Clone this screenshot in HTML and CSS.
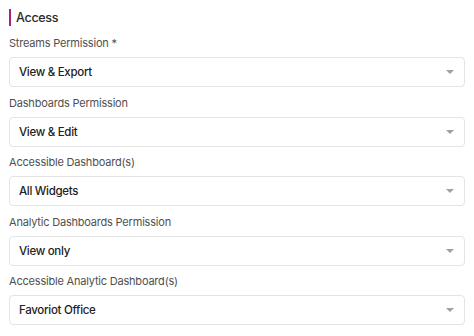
FILE: index.html
```html
<!DOCTYPE html>
<html>
<head>
<meta charset="utf-8">
<link rel="stylesheet" href="styles.css">
</head>
<body>
<div class="panel">
  <h2 class="section-title">Access</h2>

  <div class="field">
    <label class="field-label">Streams Permission *</label>
    <div class="select"><span class="select-value">View &amp; Export</span><span class="caret"></span></div>
  </div>

  <div class="field">
    <label class="field-label">Dashboards Permission</label>
    <div class="select"><span class="select-value">View &amp; Edit</span><span class="caret"></span></div>
  </div>

  <div class="field">
    <label class="field-label">Accessible Dashboard(s)</label>
    <div class="select"><span class="select-value">All Widgets</span><span class="caret"></span></div>
  </div>

  <div class="field">
    <label class="field-label">Analytic Dashboards Permission</label>
    <div class="select"><span class="select-value">View only</span><span class="caret"></span></div>
  </div>

  <div class="field">
    <label class="field-label">Accessible Analytic Dashboard(s)</label>
    <div class="select"><span class="select-value">Favoriot Office</span><span class="caret"></span></div>
  </div>
</div>
</body>
</html>
```

FILE: styles.css
```css
html, body {
  margin: 0;
  padding: 0;
  background: #ffffff;
}

body {
  font-family: Inter, "Noto Sans", "Liberation Sans", sans-serif;
  color: #333333;
}

.panel {
  padding: 9px 9px 0 9px;
  display: flex;
  flex-direction: column;
}

.section-title {
  margin: 0 0 9px 0;
  height: 17px;
  line-height: 17px;
  font-size: 12.5px;
  font-weight: 500;
  letter-spacing: -0.3px;
  color: #2b2b2b;
  border-left: 2px solid #a4237f;
  padding-left: 5px;
}

.field {
  display: flex;
  flex-direction: column;
  margin-bottom: 7.5px;
}

.field-label {
  font-size: 11px;
  line-height: 16px;
  letter-spacing: -0.2px;
  color: #505050;
  margin-bottom: 6px;
}

.select {
  height: 30px;
  box-sizing: border-box;
  border: 1px solid #e4e4e4;
  border-radius: 4px;
  background: #ffffff;
  display: flex;
  align-items: center;
  justify-content: space-between;
  padding: 0 10px 0 9px;
}

.select-value {
  font-size: 11.5px;
  font-weight: 500;
  letter-spacing: -0.3px;
  color: #222222;
}

.caret {
  width: 0;
  height: 0;
  border-left: 4px solid transparent;
  border-right: 4px solid transparent;
  border-top: 4px solid #a0a0a0;
}
```
